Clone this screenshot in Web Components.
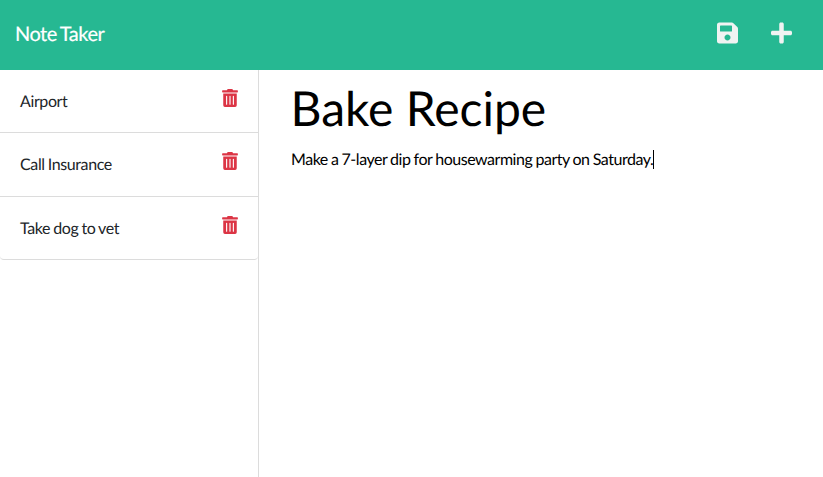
<!DOCTYPE html>
<html>
<head>
<meta charset="utf-8">
<title>Note Taker</title>
<style>
  html, body { margin: 0; height: 100%; }
  body { font-family: Lato, sans-serif; color: #212529; background: #fff; overflow: hidden; text-rendering: geometricPrecision; }
</style>
</head>
<body>
<note-app>
  <note-nav slot="nav" title-text="Note Taker"></note-nav>
  <note-list slot="list">
    <note-item>Airport</note-item>
    <note-item>Call Insurance</note-item>
    <note-item>Take dog to vet</note-item>
  </note-list>
  <note-editor slot="editor" heading="Bake Recipe" body="Make a 7-layer dip for housewarming party on Saturday."></note-editor>
</note-app>

<script>
  class NoteApp extends HTMLElement {
    constructor() {
      super();
      this.attachShadow({mode: "open"});
      this.shadowRoot.innerHTML = `
        <style>
          :host { display: grid; grid-template-columns: 259px 1fr; grid-template-rows: 70px 407px; height: 477px; }
          .top { grid-column: 1 / 3; }
          .side { border-right: 1px solid #dcdcdc; }
        </style>
        <div class="top"><slot name="nav"></slot></div>
        <div class="side"><slot name="list"></slot></div>
        <div><slot name="editor"></slot></div>
      `;
    }
  }

  class NoteNav extends HTMLElement {
    constructor() {
      super();
      this.attachShadow({mode: "open"});
      this.shadowRoot.innerHTML = `
        <style>
          :host { display: flex; align-items: center; justify-content: space-between; height: 70px; padding: 0 31px 0 15px; background: #26b892; }
          a { color: #fff; font-size: 20px; line-height: 30px; margin-top: -2px; letter-spacing: -0.5px; word-spacing: -1px; -webkit-text-stroke: 0.2px #fff; }
          div { display: flex; gap: 33px; margin-top: -4px; }
          svg { display: block; width: 21px; height: 24px; fill: #f0f3f2; }
        </style>
        <a></a>
        <div>
          <svg viewBox="0 0 448 512"><path d="M433.941 129.941l-83.882-83.882A48 48 0 0 0 316.118 32H48C21.49 32 0 53.49 0 80v352c0 26.51 21.49 48 48 48h352c26.51 0 48-21.49 48-48V163.882a48 48 0 0 0-14.059-33.941zM224 416c-35.346 0-64-28.654-64-64 0-35.346 28.654-64 64-64s64 28.654 64 64c0 35.346-28.654 64-64 64zm96-304.52V212c0 6.627-5.373 12-12 12H76c-6.627 0-12-5.373-12-12V108c0-6.627 5.373-12 12-12h228.52c3.183 0 6.235 1.264 8.485 3.515l3.48 3.48A11.996 11.996 0 0 1 320 111.48z"/></svg>
          <svg viewBox="0 0 448 512"><path d="M416 208H272V64c0-17.67-14.33-32-32-32h-32c-17.67 0-32 14.33-32 32v144H32c-17.67 0-32 14.33-32 32v32c0 17.67 14.33 32 32 32h144v144c0 17.67 14.33 32 32 32h32c17.67 0 32-14.33 32-32V304h144c17.67 0 32-14.33 32-32v-32c0-17.67-14.33-32-32-32z"/></svg>
        </div>
      `;
      this.shadowRoot.querySelector("a").textContent = this.getAttribute("title-text");
    }
  }

  class NoteList extends HTMLElement {
    constructor() {
      super();
      this.attachShadow({mode: "open"});
      this.shadowRoot.innerHTML = `
        <style>
          :host { display: block; }
        </style>
        <slot></slot>
      `;
    }
  }

  class NoteItem extends HTMLElement {
    constructor() {
      super();
      this.attachShadow({mode: "open"});
      this.shadowRoot.innerHTML = `
        <style>
          :host { display: flex; align-items: center; justify-content: space-between; box-sizing: border-box; height: 63.33px; padding: 0 20px; font-size: 16px; letter-spacing: -0.38px; word-spacing: -0.7px; border-bottom: 1px solid #dcdcdc; }
          :host(:last-child) { border-radius: 0 0 4px 4px; }
          span { margin-top: 1px; }
          svg { display: block; width: 16px; height: 18px; fill: #dc3545; margin-top: -6px; }
        </style>
        <span><slot></slot></span>
        <svg viewBox="0 0 448 512"><path d="M32 464a48 48 0 0 0 48 48h288a48 48 0 0 0 48-48V128H32zm272-256a16 16 0 0 1 32 0v224a16 16 0 0 1-32 0zm-96 0a16 16 0 0 1 32 0v224a16 16 0 0 1-32 0zm-96 0a16 16 0 0 1 32 0v224a16 16 0 0 1-32 0zM432 32H312l-9.4-18.7A24 24 0 0 0 281.1 0H166.8a23.72 23.72 0 0 0-21.4 13.3L136 32H16A16 16 0 0 0 0 48v32a16 16 0 0 0 16 16h416a16 16 0 0 0 16-16V48a16 16 0 0 0-16-16z"/></svg>
      `;
    }
  }

  class NoteEditor extends HTMLElement {
    constructor() {
      super();
      this.attachShadow({mode: "open"});
      this.shadowRoot.innerHTML = `
        <style>
          :host { display: block; padding: 10px 32px; color: #000; }
          h1 { margin: 0 0 0 -0.5px; font-size: 48px; font-weight: 400; line-height: 58px; }
          p { margin: 10px 0 0; font-size: 16px; line-height: 24px; letter-spacing: -0.47px; word-spacing: -0.5px; }
          i { display: inline-block; width: 1px; height: 19px; background: #000; vertical-align: -4px; }
        </style>
        <h1></h1>
        <p><span></span><i></i></p>
      `;
      this.shadowRoot.querySelector("h1").textContent = this.getAttribute("heading");
      this.shadowRoot.querySelector("span").textContent = this.getAttribute("body");
    }
  }

  customElements.define("note-app", NoteApp);
  customElements.define("note-nav", NoteNav);
  customElements.define("note-list", NoteList);
  customElements.define("note-item", NoteItem);
  customElements.define("note-editor", NoteEditor);
</script>
</body>
</html>
